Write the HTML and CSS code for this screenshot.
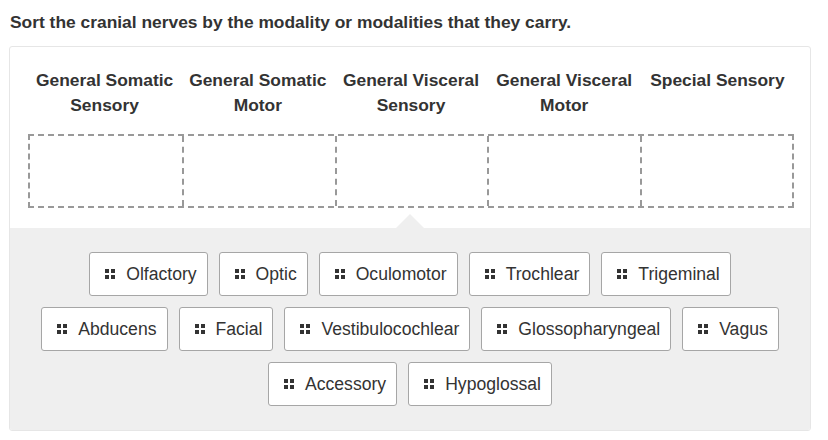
FILE: index.html
```html
<!DOCTYPE html>
<html>
<head>
<meta charset="utf-8">
<link rel="stylesheet" href="styles.css">
</head>
<body>
<div class="page">
  <p class="prompt">Sort the cranial nerves by the modality or modalities that they carry.</p>
  <div class="panel">
    <div class="targets">
      <div class="heads">
        <div class="head">General Somatic Sensory</div>
        <div class="head">General Somatic Motor</div>
        <div class="head">General Visceral Sensory</div>
        <div class="head">General Visceral Motor</div>
        <div class="head">Special Sensory</div>
      </div>
      <div class="zones">
        <div class="zone"></div>
        <div class="zone"></div>
        <div class="zone"></div>
        <div class="zone"></div>
        <div class="zone"></div>
      </div>
    </div>
    <div class="bank">
      <div class="tile"><span class="grip"><i></i><i></i><i></i><i></i></span>Olfactory</div>
      <div class="tile"><span class="grip"><i></i><i></i><i></i><i></i></span>Optic</div>
      <div class="tile"><span class="grip"><i></i><i></i><i></i><i></i></span>Oculomotor</div>
      <div class="tile"><span class="grip"><i></i><i></i><i></i><i></i></span>Trochlear</div>
      <div class="tile"><span class="grip"><i></i><i></i><i></i><i></i></span>Trigeminal</div>
      <div class="tile"><span class="grip"><i></i><i></i><i></i><i></i></span>Abducens</div>
      <div class="tile"><span class="grip"><i></i><i></i><i></i><i></i></span>Facial</div>
      <div class="tile"><span class="grip"><i></i><i></i><i></i><i></i></span>Vestibulocochlear</div>
      <div class="tile"><span class="grip"><i></i><i></i><i></i><i></i></span>Glossopharyngeal</div>
      <div class="tile"><span class="grip"><i></i><i></i><i></i><i></i></span>Vagus</div>
      <div class="tile"><span class="grip"><i></i><i></i><i></i><i></i></span>Accessory</div>
      <div class="tile"><span class="grip"><i></i><i></i><i></i><i></i></span>Hypoglossal</div>
    </div>
  </div>
</div>
</body>
</html>
```
FILE: styles.css
```css
* { box-sizing: border-box; }
html, body { margin: 0; padding: 0; background: #fff; }
body {
  font-family: "Liberation Sans", Arial, Helvetica, sans-serif;
  color: #333;
}
.page { padding: 11px 17px 0 9px; }
.prompt {
  margin: 0 0 0 1px;
  font-size: 17.4px;
  line-height: 22px;
  font-weight: bold;
  color: #333;
}
.panel {
  margin-top: 13px;
  border: 1px solid #e6e6e6;
  border-radius: 3px;
  overflow: hidden;
}
.targets {
  padding: 21px 16px 20px 18px;
  position: relative;
}
.targets::after {
  content: "";
  position: absolute;
  left: 50%;
  bottom: 0;
  margin-left: -14px;
  border-left: 14px solid transparent;
  border-right: 14px solid transparent;
  border-bottom: 14px solid #efefef;
}
.heads {
  display: grid;
  grid-template-columns: repeat(5, 1fr);
}
.head {
  text-align: center;
  font-weight: bold;
  font-size: 17.4px;
  line-height: 25px;
  padding: 0 4px;
  min-height: 50px;
}
.zones {
  margin-top: 16px;
  display: grid;
  grid-template-columns: repeat(5, 1fr);
  border: 2px dashed #999;
  height: 74px;
}
.zone + .zone { border-left: 2px dashed #999; }
.bank {
  background: #efefef;
  padding: 24px 30px;
  display: flex;
  flex-wrap: wrap;
  justify-content: center;
  gap: 11px 11px;
}
.tile {
  display: flex;
  align-items: center;
  height: 44px;
  padding: 0 10px 0 15px;
  background: #fff;
  border: 1px solid #a6a6a6;
  border-radius: 3px;
  font-size: 17.6px;
  color: #333;
}
.grip {
  display: grid;
  grid-template-columns: 4px 4px;
  grid-template-rows: 4px 4px;
  gap: 2px;
  margin-right: 11px;
}
.grip i { display: block; background: #333; }
```
